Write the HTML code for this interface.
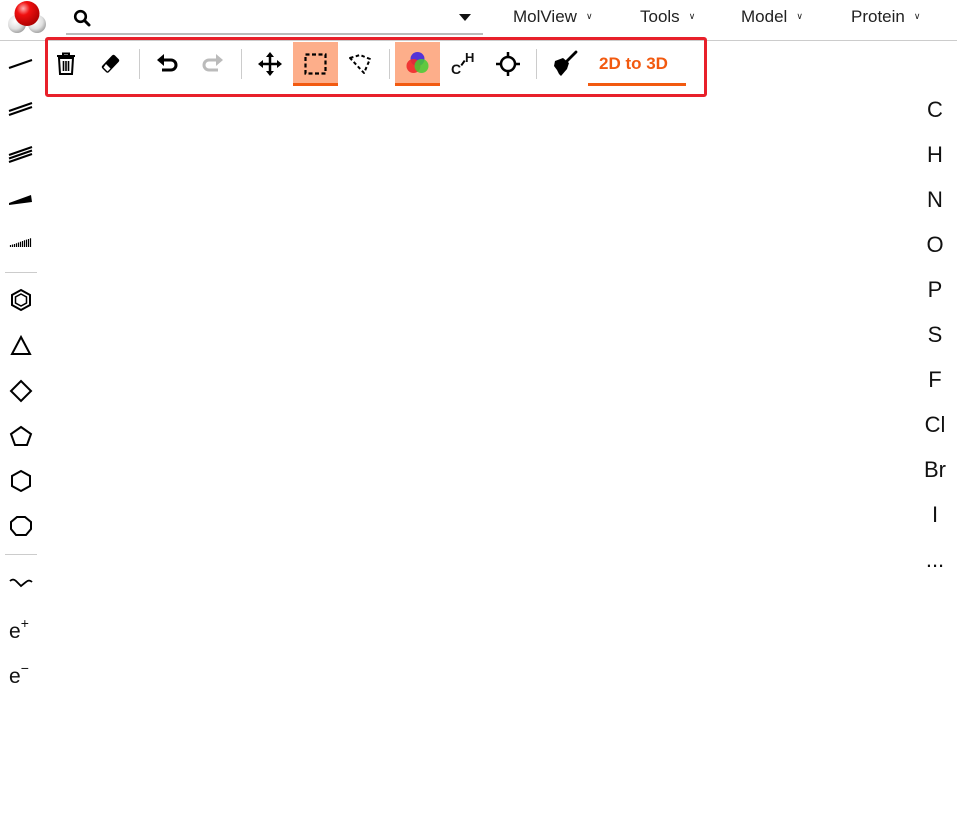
<!DOCTYPE html>
<html><head><meta charset="utf-8">
<style>
*{margin:0;padding:0;box-sizing:border-box}
body{width:957px;height:818px;background:#fff;position:relative;overflow:hidden;font-family:"Liberation Sans",sans-serif;color:#111}
.a{position:absolute}
.menu{position:absolute;top:7px;font-size:17px;color:#222}
.menu span{font-size:9px;margin-left:9px;position:relative;top:-3px}
.el{position:absolute;width:40px;left:915px;text-align:center;font-size:22px;color:#111}
.sep{position:absolute;width:1px;height:30px;top:49px;background:#ccc}
.lsep{position:absolute;left:5px;width:32px;height:1px;background:#ccc}
</style></head><body>
<!-- logo -->
<svg class="a" style="left:6px;top:0px" width="42" height="36" viewBox="0 0 42 36">
<defs>
<radialGradient id="r" cx="0.35" cy="0.3" r="0.75"><stop offset="0" stop-color="#ffb0b0"/><stop offset="0.35" stop-color="#f01010"/><stop offset="1" stop-color="#a00"/></radialGradient>
<radialGradient id="w" cx="0.4" cy="0.35" r="0.7"><stop offset="0" stop-color="#fff"/><stop offset="0.6" stop-color="#e0e0e0"/><stop offset="1" stop-color="#999"/></radialGradient>
</defs>
<circle cx="11" cy="24" r="9" fill="url(#w)"/>
<circle cx="31" cy="24" r="9" fill="url(#w)"/>
<circle cx="21" cy="13.5" r="12.5" fill="url(#r)"/>
</svg>
<!-- search -->
<svg class="a" style="left:73px;top:9px" width="18" height="18" viewBox="0 0 18 18"><circle cx="7.5" cy="7.5" r="5.3" fill="none" stroke="#000" stroke-width="2.6"/><path d="M11.5 11.5L16 16" stroke="#000" stroke-width="3" stroke-linecap="round"/></svg>
<div class="a" style="left:66px;top:33px;width:417px;height:2px;background:#bbb"></div>
<svg class="a" style="left:459px;top:14px" width="12" height="8"><path d="M0 0H12L6 7Z" fill="#111"/></svg>
<div class="menu" style="left:513px">MolView<span>&#8744;</span></div>
<div class="menu" style="left:640px">Tools<span>&#8744;</span></div>
<div class="menu" style="left:741px">Model<span>&#8744;</span></div>
<div class="menu" style="left:851px">Protein<span>&#8744;</span></div>
<div class="a" style="left:0;top:40px;width:957px;height:1px;background:#ccc"></div>

<!-- toolbar box -->
<div class="a" style="left:45px;top:37px;width:662px;height:60px;border:3px solid #e8202a;border-radius:3px"></div>
<div class="a" style="left:293px;top:42px;width:45px;height:44px;background:#fdae8a;border-bottom:3px solid #f25a10"></div>
<div class="a" style="left:395px;top:42px;width:45px;height:44px;background:#fdae8a;border-bottom:3px solid #f25a10"></div>
<div class="sep" style="left:139px"></div><div class="sep" style="left:241px"></div><div class="sep" style="left:389px"></div><div class="sep" style="left:536px"></div>
<!-- trash -->
<svg class="a" style="left:55px;top:52px" width="22" height="24" viewBox="0 0 22 24"><path d="M2 4H20M8 4V1.5H14V4" fill="none" stroke="#000" stroke-width="2"/><path d="M4 6H18L17 22H5Z" fill="none" stroke="#000" stroke-width="2"/><path d="M8.5 9V19M11 9V19M13.5 9V19" stroke="#000" stroke-width="1.6"/></svg>
<!-- eraser -->
<svg class="a" style="left:99px;top:53px" width="22" height="22" viewBox="0 0 22 22"><path d="M13 2.5Q14.5 1 16 2.5L19.5 6Q21 7.5 19.5 9L10 19Q8.5 20.5 7 19L3.5 15.5Q2 14 3.5 12.5Z" fill="#000"/><path d="M7 11L11.5 15.5L8.5 18.5L4.5 14.5Z" fill="#fff"/></svg>
<!-- undo -->
<svg class="a" style="left:156px;top:53px" width="24" height="22" viewBox="0 0 24 22"><path d="M4 7H15A5 5 0 0 1 15 17H6" fill="none" stroke="#000" stroke-width="3"/><path d="M1 7L8 1V13Z" fill="#000"/></svg>
<!-- redo -->
<svg class="a" style="left:200px;top:53px" width="24" height="22" viewBox="0 0 24 22"><path d="M20 7H9A5 5 0 0 0 9 17H18" fill="none" stroke="#bbb" stroke-width="3"/><path d="M23 7L16 1V13Z" fill="#bbb"/></svg>
<!-- move -->
<svg class="a" style="left:258px;top:52px" width="24" height="24" viewBox="0 0 24 24"><path d="M12 3V21M3 12H21" stroke="#000" stroke-width="2.5"/><path d="M12 0L16 5H8ZM12 24L16 19H8ZM0 12L5 8V16ZM24 12L19 8V16Z" fill="#000"/></svg>
<!-- rect select -->
<svg class="a" style="left:304px;top:53px" width="23" height="22"><rect x="1.5" y="1.5" width="20" height="19" fill="none" stroke="#000" stroke-width="2.2" stroke-dasharray="4 2.5"/></svg>
<!-- lasso -->
<svg class="a" style="left:348px;top:53px" width="25" height="22"><path d="M2 5L12 2L22 6L16 20Z" fill="none" stroke="#000" stroke-width="2" stroke-dasharray="3.5 2.5" stroke-linejoin="round"/></svg>
<!-- colors -->
<svg class="a" style="left:404px;top:50px" width="27" height="26"><circle cx="13.5" cy="9" r="7" fill="#5433d6"/><circle cx="9.5" cy="16" r="7" fill="#ee2a2a" opacity="0.9"/><circle cx="17.5" cy="16" r="7" fill="#44cc33" opacity="0.85"/></svg>
<!-- CH -->
<div class="a" style="left:451px;top:61px;font-weight:bold;font-size:14px">C</div>
<div class="a" style="left:465px;top:50px;font-weight:bold;font-size:13px">H</div>
<div class="a" style="left:462px;top:60px;width:2px;height:6px;background:#000;transform:rotate(35deg)"></div>
<!-- target -->
<svg class="a" style="left:496px;top:52px" width="24" height="24"><circle cx="12" cy="12" r="7" fill="none" stroke="#000" stroke-width="2.5"/><path d="M12 0V5M12 19V24M0 12H5M19 12H24" stroke="#000" stroke-width="2.5"/></svg>
<!-- broom -->
<svg class="a" style="left:552px;top:50px" width="28" height="28" viewBox="0 0 28 28"><path d="M24 2L15 11" stroke="#000" stroke-width="2.8" stroke-linecap="round"/><path d="M3 11L11 8L17 13L15 19L9 26L7 24L5 20L2 16Z" fill="#000"/></svg>
<div class="a" style="left:599px;top:54px;font-weight:bold;font-size:17px;color:#f25a10">2D to 3D</div>
<div class="a" style="left:588px;top:83px;width:98px;height:3px;background:#f25a10"></div>

<!-- left sidebar -->
<svg class="a" style="left:0;top:41px" width="42" height="700" viewBox="0 0 42 700">
<g stroke="#000" fill="none" stroke-width="2">
<path d="M9 27L32 19"/>
<path d="M9 70L32 62M9 74L32 66"/>
<path d="M9 114L32 106M9 117.5L32 109.5M9 121L32 113"/>
</g>
<path d="M9 162L31 154L32 161L9 164Z" fill="#000"/>
<g stroke="#000" stroke-width="1.2"><path d="M10.5 204V206M12.5 203.5V206M14.5 203V206M16.5 202.3V206M18.5 201.5V206M20.5 200.7V206M22.5 200V206M24.5 199.3V206M26.5 198.6V206M28.5 198V206M30.5 197.3V206"/></g>
<g stroke="#000" fill="none" stroke-width="2">
<path d="M21 249L30 254V264L21 269L12 264V254Z"/><path d="M21 253L26.5 256V262L21 265L15.5 262V256Z" stroke-width="1.5"/>
<path d="M21 296L30 313H12Z"/>
<path d="M21 340L31 350L21 360L11 350Z"/>
<path d="M21 386L31 393L27 404H15L11 393Z"/>
<path d="M21 430L30 435V445L21 450L12 445V435Z"/>
<path d="M17 476H25L31 481L31 488L26 494H16L11 488L11 481Z"/>
<path d="M10 540Q13 537 16 540L21 545L26 541Q29 538 32 541" stroke-width="1.8"/>
</g>
</svg>
<div class="lsep" style="top:272px"></div>
<div class="lsep" style="top:554px"></div>
<div class="a" style="left:9px;top:617px;font-size:21px">e<sup style="font-size:14px;position:relative;top:-2px">+</sup></div>
<div class="a" style="left:9px;top:662px;font-size:21px">e<sup style="font-size:14px;position:relative;top:-2px">&minus;</sup></div>

<!-- elements -->
<div class="el" style="top:97px">C</div>
<div class="el" style="top:142px">H</div>
<div class="el" style="top:187px">N</div>
<div class="el" style="top:232px">O</div>
<div class="el" style="top:277px">P</div>
<div class="el" style="top:322px">S</div>
<div class="el" style="top:367px">F</div>
<div class="el" style="top:412px">Cl</div>
<div class="el" style="top:457px">Br</div>
<div class="el" style="top:502px">I</div>
<div class="el" style="top:547px">...</div>
</body></html>
